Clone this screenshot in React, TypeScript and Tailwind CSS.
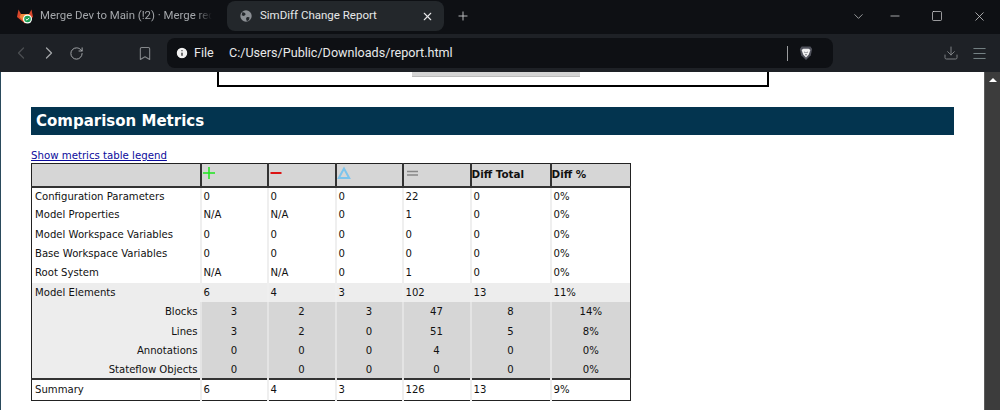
import React from "react";
import { X, Plus, ChevronDown, Minus, Square, ChevronLeft, ChevronRight, RotateCw, Bookmark, Download, Menu, Info } from "lucide-react";

const font = "font-['DejaVu_Sans',Verdana,sans-serif]";

const top: (string)[][] = [
  ["Configuration Parameters", "0", "0", "0", "22", "0", "0%"],
  ["Model Properties", "N/A", "N/A", "0", "1", "0", "0%"],
  ["Model Workspace Variables", "0", "0", "0", "0", "0", "0%"],
  ["Base Workspace Variables", "0", "0", "0", "0", "0", "0%"],
  ["Root System", "N/A", "N/A", "0", "1", "0", "0%"],
];
const subs: string[][] = [
  ["Blocks", "3", "2", "3", "47", "8", "14%"],
  ["Lines", "3", "2", "0", "51", "5", "8%"],
  ["Annotations", "0", "0", "0", "4", "0", "0%"],
  ["Stateflow Objects", "0", "0", "0", "0", "0", "0%"],
];

function Row({ r, bg }: { r: string[]; bg: string }) {
  return (
    <tr className={`h-[19.3px] ${bg}`}>
      {r.map((c, i) => (
        <td key={i} className={`p-0 pb-[1px] align-middle ${i > 0 ? "border-l-2 border-[#efefef] pl-[2px]" : "pl-[3px]"}`}>{c}</td>
      ))}
    </tr>
  );
}

function Head({ children }: { children?: React.ReactNode }) {
  return <th className="p-0 h-[23px] border-l-2 border-[#333] text-left align-middle font-bold text-[10.4px]">{children}</th>;
}

export default function App() {
  return (
    <div className="w-[1000px] h-[410px] overflow-hidden bg-white flex flex-col font-['Roboto',sans-serif]">
      {/* tab strip */}
      <div className="h-[34px] bg-[#0e1014] flex items-center shrink-0 pb-[2px]">
        <div className="w-[227px] flex items-center pl-[17px] text-[#a3a6aa] text-[11.4px] whitespace-nowrap">
          <span className="relative w-4 h-4 mr-[7px] shrink-0">
            <svg viewBox="0 0 16 16" className="w-4 h-4">
              <path d="M1.500 1.500L4 6h8l2.500-4.500L16 9l-8 6.500L0 9z" fill="#d9472b" />
              <path d="M4 6h8l1.500 3L8 15 2.500 9z" fill="#f08a3c" />
              <circle cx="10.500" cy="11" r="4.500" fill="#fff" />
              <circle cx="10.500" cy="11" r="3.300" fill="#1f9e55" />
              <path d="M8.800 11l1.200 1.200 2.200-2.300" stroke="#fff" strokeWidth="1" fill="none" />
            </svg>
          </span>
          <span className="w-[172px] overflow-hidden [mask-image:linear-gradient(to_right,black_90%,transparent)]">Merge Dev to Main (!2) · Merge req</span>
        </div>
        <div className="w-[217px] h-[30px] bg-[#23272b] rounded-lg flex items-center pl-[12px] pr-[10px] text-[#e6e7e8] text-[11.5px]">
          <svg viewBox="0 0 16 16" className="w-[14px] h-[14px] mr-[7px] shrink-0">
            <circle cx="8" cy="8" r="6.500" fill="#8b8f94" />
            <path d="M4 3.500l3 1 .5 2-2 1.500-2.500-1zM9 9l3 .5-.5 3-2.500 1.500-1-3z" fill="#23272b" />
          </svg>
          <span className="flex-1 whitespace-nowrap">SimDiff Change Report</span>
          <X className="w-[13px] h-[13px] text-[#e6e7e8]" strokeWidth={2} />
        </div>
        <Plus className="w-[14px] h-[14px] ml-[12px] text-[#c4c6c8]" strokeWidth={1.6} />
        <div className="flex-1" />
        <ChevronDown className="w-[15px] h-[15px] text-[#b5b7b9] mr-[22px]" strokeWidth={1.3} />
        <Minus className="w-[14px] h-[14px] text-[#d5d6d7] mr-[29px]" strokeWidth={1.3} />
        <Square className="w-[12px] h-[12px] text-[#d5d6d7] mr-[29px]" strokeWidth={1.4} />
        <X className="w-[15px] h-[15px] text-[#d5d6d7] mr-[13px]" strokeWidth={1.2} />
      </div>
      {/* toolbar */}
      <div className="h-[38px] bg-[#1e2126] flex items-center shrink-0 relative">
        <ChevronLeft className="w-[20px] h-[20px] ml-[11px] text-[#4b4e52]" strokeWidth={1.5} />
        <ChevronRight className="w-[20px] h-[20px] ml-[8px] text-[#a3a6a9]" strokeWidth={1.5} />
        <RotateCw className="w-[15px] h-[15px] ml-[10px] text-[#a3a6a9]" strokeWidth={1.6} />
        <Bookmark className="w-[16px] h-[17px] ml-[53px] text-[#85888b]" strokeWidth={1.6} />
        <div className="ml-[14px] w-[666px] h-[30px] bg-[#0e1014] rounded-lg flex items-center pl-[8px] text-[12.6px] text-[#e8e9ea]">
          <Info className="w-[14px] h-[14px] mr-[5px] text-[#0e1014] fill-[#f2f2f2]" strokeWidth={2} />
          <span className="w-[35px]">File</span>
          <span className="flex-1 whitespace-nowrap">C:/Users/Public/Downloads/report.html</span>
          <span className="w-px h-[15px] bg-[#9a9c9e] mr-[11px]" />
          <svg viewBox="0 0 16 18" className="w-[14px] h-[16px] mr-[20px]">
            <path d="M3 1.500h10l2 3-1.500 7L8 17l-5.500-5.500L1 4.500z" fill="#50525c" />
            <path d="M5 4h6l2 1.500-1 3-1 2.500-3 3-3-3-1-2.500-1-3z" fill="#f1f1f2" />
            <path d="M6 8l1.500.5M10 8l-1.500.5M7 11h2" stroke="#50525c" strokeWidth="1" />
          </svg>
        </div>
        <Download className="w-[16px] h-[16px] ml-[110px] text-[#7d8083]" strokeWidth={1.5} />
        <Menu className="w-[17px] h-[17px] ml-[12px] text-[#7d8c8e]" strokeWidth={1.3} />
      </div>
      {/* page */}
      <div className="flex-1 flex min-h-0 overflow-hidden">
        <div className={`flex-1 min-w-0 bg-white text-[10.1px] leading-[13px] text-[#111] border-l border-[#2a4a5c] ${font}`}>
          <div className="ml-[216px] w-[552px] h-[15px] border-x-2 border-b-2 border-black flex justify-center items-start">
            <div className="w-[168px] h-[5px] ml-[6px] bg-[#d4d4d4] border-b border-[#bbb]" />
          </div>
          <div className="ml-[30px] mt-[20px] w-[923px] h-[28px] bg-[#03344f] text-white font-bold text-[15px] leading-[28px] pl-[5px]">
            Comparison Metrics
          </div>
          <a href="#" className="block ml-[30px] mt-[14px] h-[14px] text-[#0b0b9c] underline text-[10.2px]">Show metrics table legend</a>
          <table className="ml-[30px] w-[600px] border-collapse table-fixed border border-[#222]">
            <colgroup>
              <col className="w-[169px]" />
              <col className="w-[67px]" />
              <col className="w-[68px]" />
              <col className="w-[67px]" />
              <col className="w-[68px]" />
              <col className="w-[80px]" />
              <col className="w-[80px]" />
            </colgroup>
            <thead>
              <tr className="bg-[#d6d6d6] border-b-2 border-[#333]">
                <th className="p-0 h-[23px]" />
                <Head>
                  <svg viewBox="0 0 14 14" className="w-[14px] h-[14px] mb-[3px]"><path d="M7 1v12M1 7h12" stroke="#1ee61e" strokeWidth="1.500" /></svg>
                </Head>
                <Head>
                  <svg viewBox="0 0 14 14" className="w-[14px] h-[14px] mb-[3px]"><path d="M1.500 7h11" stroke="#dc1414" strokeWidth="2" /></svg>
                </Head>
                <Head>
                  <svg viewBox="0 0 14 14" className="w-[14px] h-[14px] mb-[3px]"><path d="M7 2.500L1.800 12h10.400z" stroke="#7cc4ec" strokeWidth="2" fill="none" /></svg>
                </Head>
                <Head>
                  <svg viewBox="0 0 14 14" className="w-[14px] h-[14px] mb-[3px] ml-[2px]"><path d="M1 5.500h11M1 9h11" stroke="#888" strokeWidth="1.500" /></svg>
                </Head>
                <Head>Diff Total</Head>
                <Head>Diff %</Head>
              </tr>
            </thead>
            <tbody>
              {top.map((r) => <Row key={r[0]} r={r} bg="bg-white" />)}
              <Row r={["Model Elements", "6", "4", "3", "102", "13", "11%"]} bg="bg-[#ededed]" />
              {subs.map((r) => (
                <tr key={r[0]} className="h-[19.3px]">
                  {r.map((c, i) => (
                    <td key={i} className={i === 0 ? "p-0 pr-[2px] text-right bg-[#ededed]" : "p-0 text-center bg-[#d6d6d6] border-l-2 border-[#e4e4e4]"}>{c}</td>
                  ))}
                </tr>
              ))}
              <tr className="h-[21px] border-t-2 border-[#333] bg-white">
                {["Summary", "6", "4", "3", "126", "13", "9%"].map((c, i) => (
                  <td key={i} className={`p-0 pb-[1px] ${i > 0 ? "border-l-2 border-[#efefef] pl-[2px]" : "pl-[3px]"}`}>{c}</td>
                ))}
              </tr>
            </tbody>
          </table>
        </div>
        <div className="w-[16px] shrink-0 bg-[#3c3c3c] border-l border-[#5c5c5c] flex justify-center pt-[6px]">
          <div className="w-0 h-0 border-x-[4px] border-x-transparent border-b-[4px] border-b-white" />
        </div>
      </div>
    </div>
  );
}
